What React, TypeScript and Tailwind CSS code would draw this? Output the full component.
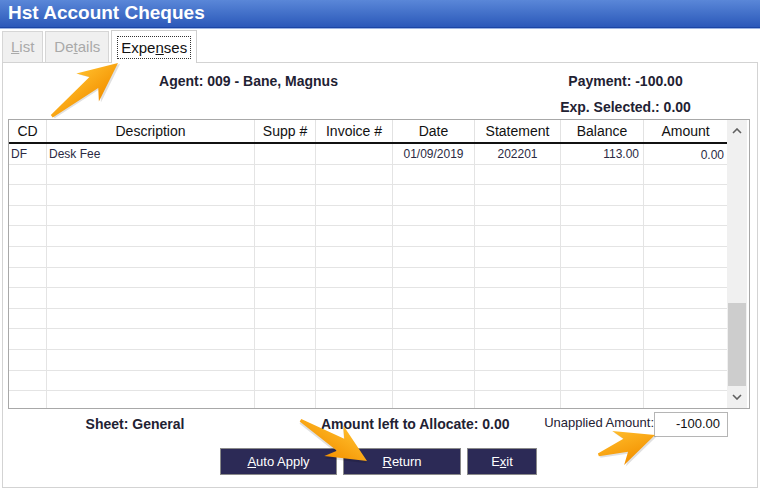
import React from "react";

const COLS = "grid grid-cols-[38px_208px_61px_77px_82px_86px_83px_83px]";

type Arrow = { x: number; y: number; angle: number; len: number };

const ARROWS: Arrow[] = [
  { x: 118, y: 63, angle: -38.8, len: 85 },
  { x: 367, y: 461, angle: 31.5, len: 78 },
  { x: 655, y: 435, angle: -19.3, len: 60 },
];

function arrowPoints(len: number) {
  return `0,0 -39,-18 -31,-7 ${-len},-1.5 ${-len},1.5 -31,7 -39,18`;
}

function Arrows() {
  return (
    <svg
      className="pointer-events-none absolute inset-0"
      width={760}
      height={490}
      viewBox="0 0 760 490"
    >
      <defs>
        <linearGradient id="orange" x1="0" y1="0" x2="0" y2="1">
          <stop offset="0" stopColor="#ffbc2a" />
          <stop offset="1" stopColor="#f39100" />
        </linearGradient>
      </defs>
      {ARROWS.map((a, i) => (
        <g key={i} transform={`translate(${a.x} ${a.y}) rotate(${a.angle})`}>
          <polygon
            points={arrowPoints(a.len)}
            fill="rgba(0,0,0,0.12)"
            transform="translate(1 2)"
          />
          <polygon points={arrowPoints(a.len)} fill="url(#orange)" />
        </g>
      ))}
    </svg>
  );
}

function Tab({
  children,
  active,
}: {
  children: React.ReactNode;
  active?: boolean;
}) {
  if (active) {
    return (
      <div className="relative -mb-px flex h-[33px] w-[86px] items-center justify-center border border-b-0 border-[#cfcfcf] bg-white">
        <span className="border border-dotted border-[#333] px-[3px] py-[2px] text-[15px] leading-[17px] text-[#111]">
          {children}
        </span>
      </div>
    );
  }
  return (
    <div className="flex h-[31px] items-center justify-center border border-b-0 border-[#d6d6d6] bg-[#f0f0f0] px-[8px] text-[15px] text-[#a9a9a9]">
      {children}
    </div>
  );
}

function Chevron({ up }: { up?: boolean }) {
  return (
    <svg width="10" height="6" viewBox="0 0 10 6">
      <path
        d={up ? "M1 5 L5 1 L9 5" : "M1 1 L5 5 L9 1"}
        fill="none"
        stroke="#606060"
        strokeWidth="1.6"
      />
    </svg>
  );
}

function Grid() {
  const headers = [
    "CD",
    "Description",
    "Supp #",
    "Invoice #",
    "Date",
    "Statement",
    "Balance",
    "Amount",
  ];
  const empty = Array.from({ length: 12 });
  return (
    <div className="ml-[5px] flex h-[290px] w-[742px] border border-[#a8a8a8]">
      <div className="w-[718px] overflow-hidden">
        <div className={`${COLS} h-[24px] border-b-2 border-[#111]`}>
          {headers.map((h) => (
            <div
              key={h}
              className="flex items-center justify-center border-r border-[#e2e2e2] pt-[1px] text-[14px] text-[#111] last:border-r-0"
            >
              {h}
            </div>
          ))}
        </div>
        <div className={`${COLS} h-[20.6px] border-b border-[#e4e4e4] text-[12px] text-[#2a2a44]`}>
          <div className="flex items-center border-r border-[#e4e4e4] pl-[2px]">DF</div>
          <div className="flex items-center border-r border-[#e4e4e4] pl-[2px]">Desk Fee</div>
          <div className="border-r border-[#e4e4e4]" />
          <div className="border-r border-[#e4e4e4]" />
          <div className="flex items-center justify-center border-r border-[#e4e4e4]">01/09/2019</div>
          <div className="flex items-center justify-center border-r border-[#e4e4e4]">202201</div>
          <div className="flex items-center justify-end border-r border-[#e4e4e4] pr-[4px]">113.00</div>
          <div className="flex items-center justify-end pr-[3px] pt-[2px]">0.00</div>
        </div>
        {empty.map((_, i) => (
          <div key={i} className={`${COLS} h-[20.6px] border-b border-[#e4e4e4]`}>
            {Array.from({ length: 8 }).map((__, j) => (
              <div key={j} className="border-r border-[#e4e4e4] last:border-r-0" />
            ))}
          </div>
        ))}
      </div>
      <div className="flex w-[20px] flex-col bg-[#f0f0f0]">
        <div className="flex h-[22px] items-center justify-center">
          <Chevron up />
        </div>
        <div className="flex-1" />
        <div className="mx-[1px] h-[83px] bg-[#cdcdcd]" />
        <div className="flex h-[22px] items-center justify-center">
          <Chevron />
        </div>
      </div>
    </div>
  );
}

function Button({
  children,
  width,
}: {
  children: React.ReactNode;
  width: string;
}) {
  return (
    <button
      className={`${width} flex h-[27px] items-center justify-center border border-[#8a8a8a] bg-[#2c2a56] text-[13px] text-white`}
    >
      {children}
    </button>
  );
}

export default function App() {
  return (
    <div
      className="relative h-[490px] w-[760px] overflow-hidden bg-white"
      style={{ fontFamily: '"Liberation Sans", Arial, sans-serif' }}
    >
      <div className="flex h-[28px] items-center border-b border-[#1b45a5] bg-gradient-to-b from-[#5a87d8] to-[#2b58b9] pl-[8px] text-[19px] font-bold text-white shadow-[0_1px_0_#9bb3e2]">
        Hst Account Cheques
      </div>

      <div className="flex h-[34px] items-end gap-[2px] pl-[2px]">
        <Tab>
          <span className="underline">L</span>ist
        </Tab>
        <Tab>
          De<span className="underline">t</span>ails
        </Tab>
        <Tab active>
          Expe<span className="underline">n</span>ses
        </Tab>
      </div>

      <div className="mx-[2px] h-[426px] border border-[#d3d3d3] bg-white">
        <div className="flex h-[56px] text-[14px] font-bold text-[#1f2233]">
          <div className="w-[491px] pt-[8px] text-center">Agent: 009 - Bane, Magnus</div>
          <div className="flex flex-1 flex-col items-center pt-[8px]">
            <div>Payment: -100.00</div>
            <div className="mt-[5px]">Exp. Selected.: 0.00</div>
          </div>
        </div>

        <Grid />

        <div className="mt-[3px] flex h-[24px] items-center">
          <div className="w-[264px] text-center text-[14px] font-bold text-[#1f2233]">
            Sheet: General
          </div>
          <div className="ml-[54px] text-[14px] font-bold text-[#1f2233]">
            Amount left to Allocate: 0.00
          </div>
          <div className="ml-auto mr-[29px] flex items-center">
            <span className="-mt-[3px] text-[13px] text-[#1f2233]">Unapplied Amount:</span>
            <div className="flex h-[25px] w-[74px] items-center justify-end border border-[#b5b5b5] pr-[7px] text-[13px] text-[#111]">
              -100.00
            </div>
          </div>
        </div>

        <div className="ml-[217px] mt-[12px] flex gap-[6px]">
          <Button width="w-[117px]">
            <span className="underline">A</span>uto Apply
          </Button>
          <Button width="w-[118px]">
            <span className="underline">R</span>eturn
          </Button>
          <Button width="w-[70px]">
            E<span className="underline">x</span>it
          </Button>
        </div>
      </div>

      <Arrows />
    </div>
  );
}
